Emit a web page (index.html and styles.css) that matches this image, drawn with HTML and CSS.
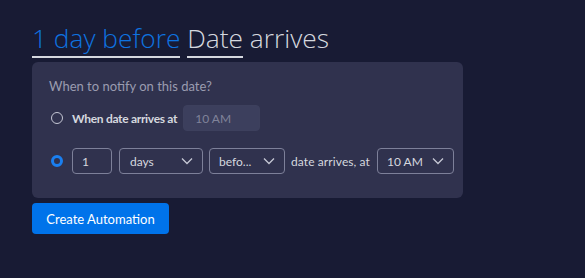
FILE: index.html
```html
<!DOCTYPE html>
<html>
<head>
    <title>Notify on date</title>
    <link rel="stylesheet" href="styles.css">
</head>
<body>
    <div class="wrap">
        <h1 class="title"><span class="blue-link">1 day before</span> <span class="field-link">Date</span> arrives</h1>

        <div class="panel">
            <div class="question">When to notify on this date?</div>

            <div class="option">
                <span class="radio"></span>
                <span class="label">When date arrives at</span>
                <div class="box disabled">10 AM</div>
            </div>

            <div class="option">
                <span class="radio checked"></span>
                <div class="box num">1</div>
                <div class="box select days">days <svg class="chev" width="12" height="8" viewBox="0 0 12 8"><path d="M1 1.5l5 5 5-5" fill="none" stroke="#c5c7d4" stroke-width="1.3"/></svg></div>
                <div class="box select when">befo... <svg class="chev" width="12" height="8" viewBox="0 0 12 8"><path d="M1 1.5l5 5 5-5" fill="none" stroke="#c5c7d4" stroke-width="1.3"/></svg></div>
                <span class="text">date arrives, at</span>
                <div class="box select hour">10 AM <svg class="chev" width="12" height="8" viewBox="0 0 12 8"><path d="M1 1.5l5 5 5-5" fill="none" stroke="#c5c7d4" stroke-width="1.3"/></svg></div>
            </div>
        </div>

        <button class="create-btn">Create Automation</button>
    </div>
</body>
</html>
```

FILE: styles.css
```css
body {
    margin: 0;
    background-color: #181b34;
    font-family: "Lato", "Inter", sans-serif;
    color: #d5d8df;
}
.wrap {
    padding: 22px 0 0 32px;
}
.title {
    margin: 0;
    font-family: "Open Sans", sans-serif;
    font-weight: 300;
    font-size: 26.3px;
    line-height: 33px;
    color: #d5d8df;
}
.blue-link {
    color: #0e73e0;
    border-bottom: 2px solid #d5d8df;
}
.field-link {
    border-bottom: 2px solid #d5d8df;
}
.panel {
    width: 431px;
    margin-top: 7px;
    background-color: #30324e;
    border-radius: 6px;
    padding: 16px 0 24px 17px;
    box-sizing: border-box;
}
.question {
    font-size: 13px;
    color: #9a9cb0;
    margin-bottom: 11px;
}
.option {
    display: flex;
    align-items: center;
    height: 26px;
    margin-bottom: 17px;
}
.option:last-child {
    margin-bottom: 0;
}
.radio {
    width: 12px;
    height: 12px;
    border: 1px solid #c5c7d4;
    border-radius: 50%;
    margin-left: 2px;
    margin-right: 9px;
    box-sizing: border-box;
}
.radio.checked {
    border: 3.5px solid #1a7ff0;
}
.label {
    font-size: 12px;
    font-weight: 700;
    letter-spacing: -0.3px;
    color: #d5d8df;
    margin-right: 6px;
}
.box {
    height: 26px;
    box-sizing: border-box;
    border: 1px solid #7d8099;
    border-radius: 4px;
    font-size: 12px;
    color: #d5d8df;
    display: flex;
    align-items: center;
    padding-left: 9px;
}
.box.disabled {
    width: 77px;
    border-color: #3d405d;
    background-color: #3c3f5d;
    color: #80839a;
    padding-left: 11px;
}
.num {
    width: 40px;
    margin-right: 7px;
}
.select {
    justify-content: space-between;
    padding-right: 9px;
}
.days {
    width: 84px;
    padding-left: 10px;
    margin-right: 6px;
}
.when {
    width: 76px;
    margin-right: 6px;
}
.text {
    font-size: 12px;
    letter-spacing: 0.1px;
    color: #d5d8df;
    margin-right: 7px;
}
.hour {
    width: 77px;
    padding-left: 9px;
}
.create-btn {
    margin-top: 5px;
    width: 137px;
    height: 31px;
    background-color: #0073ea;
    color: #ffffff;
    border: none;
    border-radius: 4px;
    font-family: "Lato", "Inter", sans-serif;
    font-size: 13px;
    cursor: pointer;
}
```
